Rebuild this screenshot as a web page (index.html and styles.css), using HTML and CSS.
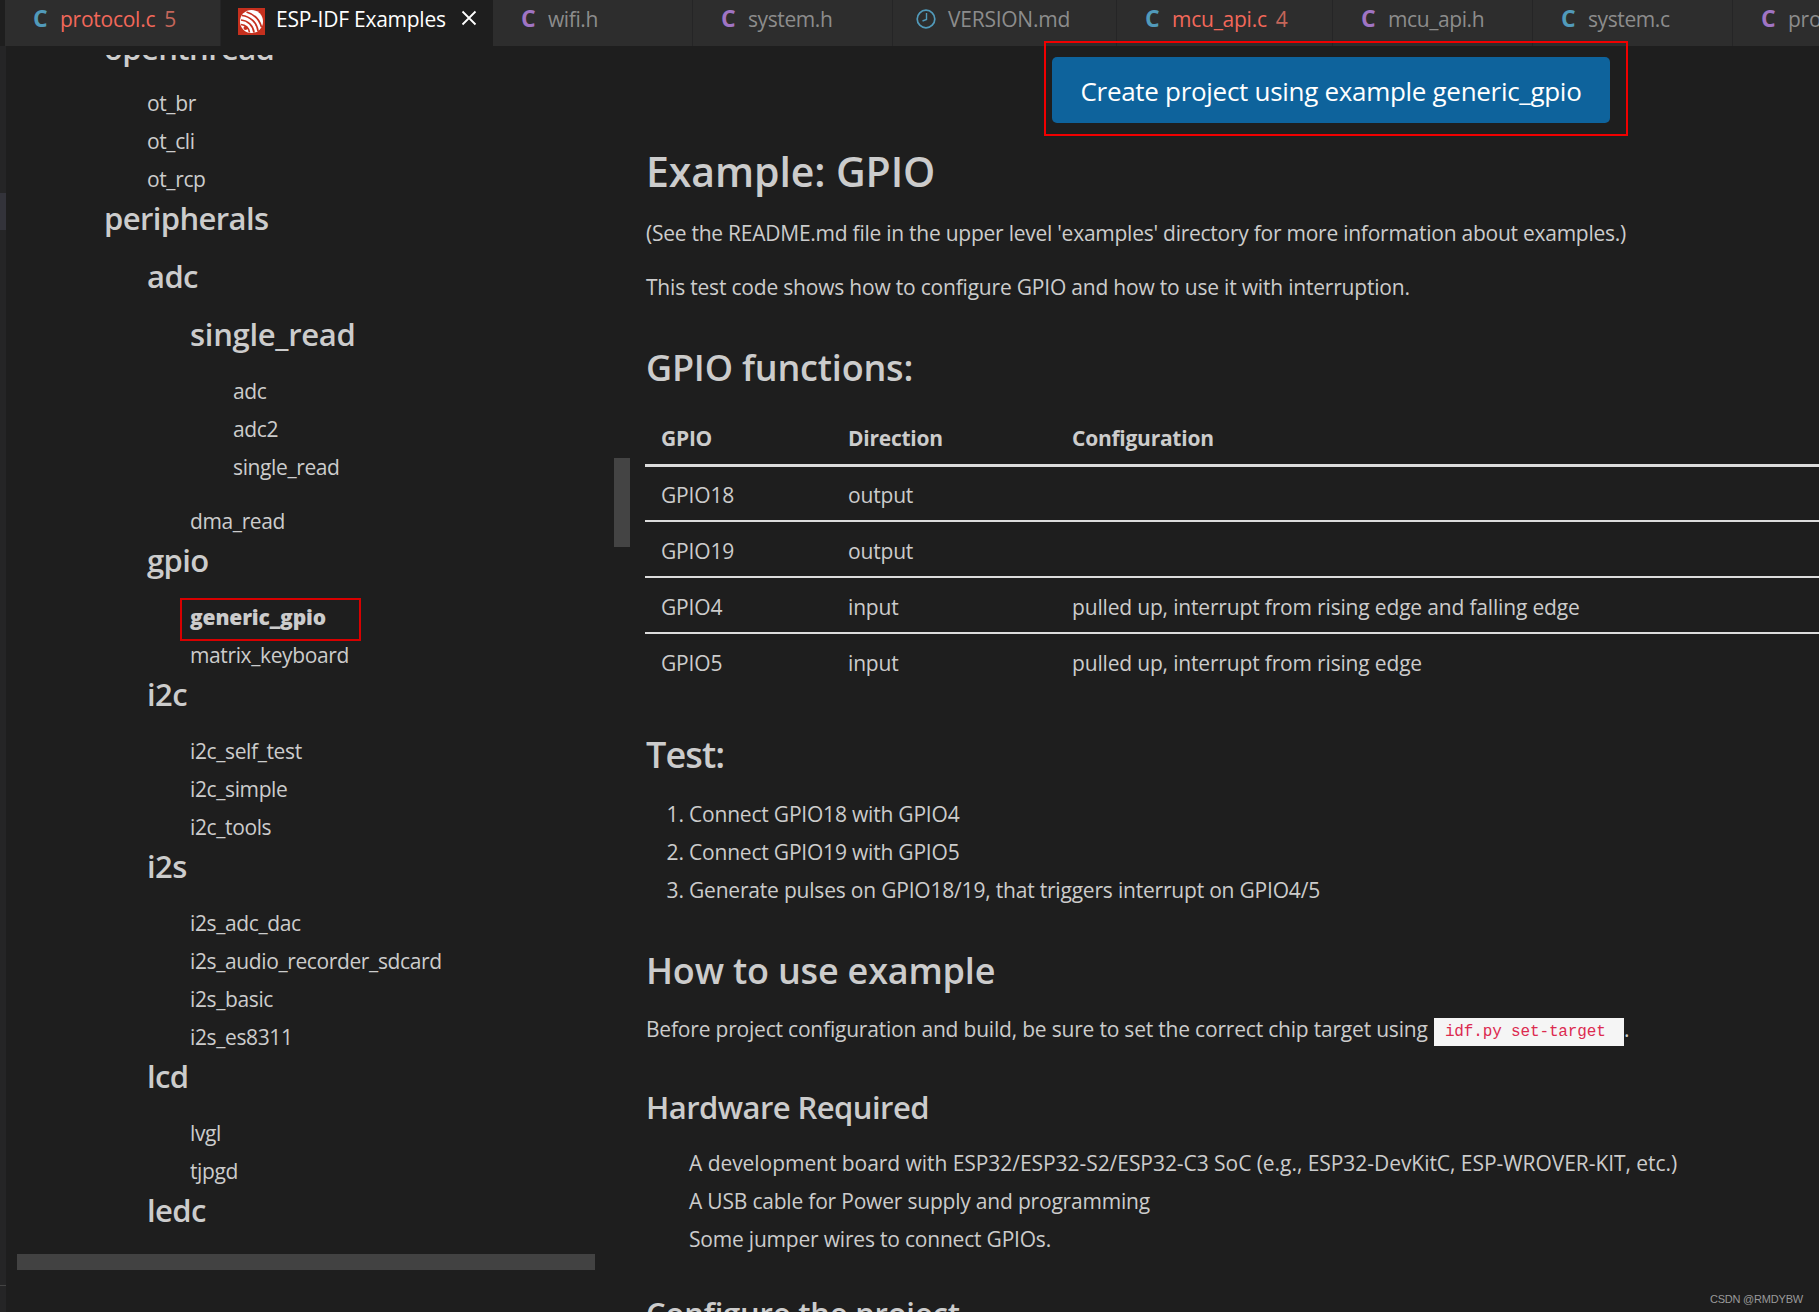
FILE: index.html
```html
<!DOCTYPE html>
<html lang="en">
<head>
<meta charset="utf-8">
<title>ESP-IDF Examples</title>
<link rel="stylesheet" href="styles.css">
</head>
<body>
<div class="app">
  <header class="tabs">
    <div class="tab t1"><span class="ic c">C</span><span class="err">protocol.c</span><span class="num">5</span></div>
    <div class="tab t2 active">
      <svg class="logo" viewBox="0 0 27 27"><rect width="27" height="27" fill="#c5301e"/><circle cx="13.500" cy="13.500" r="11.500" fill="#fff"/><g fill="none" stroke="#c5301e" stroke-width="1.700"><path d="M4 7.500a18 18 0 0 1 16 15.500"/><path d="M3 12a14 14 0 0 1 13 12.500"/><path d="M8.500 4a22 22 0 0 1 15 15"/><path d="M3 16.500a9 9 0 0 1 8.500 8"/></g><circle cx="7.500" cy="20" r="2" fill="#c5301e"/></svg>
      <span class="name">ESP-IDF Examples</span>
      <svg class="close" viewBox="0 0 16 16"><path d="M1.500 1.500l13 13M14.500 1.500l-13 13" stroke="#fff" stroke-width="1.800" fill="none"/></svg>
    </div>
    <div class="tab t3"><span class="ic h">C</span><span>wifi.h</span></div>
    <div class="tab t3"><span class="ic h">C</span><span>system.h</span></div>
    <div class="tab t4">
      <svg class="clock" viewBox="0 0 20 20"><circle cx="10" cy="10" r="8.800" fill="none" stroke="#519aba" stroke-width="1.700"/><path d="M10.500 4v6.500l-4 1.500" fill="none" stroke="#519aba" stroke-width="1.400"/></svg>
      <span>VERSION.md</span>
    </div>
    <div class="tab t5"><span class="ic c">C</span><span class="err">mcu_api.c</span><span class="num">4</span></div>
    <div class="tab t3"><span class="ic h">C</span><span>mcu_api.h</span></div>
    <div class="tab t3"><span class="ic c">C</span><span>system.c</span></div>
    <div class="tab t6"><span class="ic h">C</span><span>pro</span></div>
  </header>
  <div class="body">
    <div class="strip"><div class="strip-thumb"></div></div>
    <aside class="side">
      <div class="tree-view">
      <div class="tree">
        <h2 class="n1">openthread</h2>
        <ul class="n2-list">
          <li>ot_br</li><li>ot_cli</li><li>ot_rcp</li>
        </ul>
        <h2 class="n1">peripherals</h2>
        <h2 class="n2">adc</h2>
        <h2 class="n3">single_read</h2>
        <ul class="n4-list">
          <li>adc</li><li>adc2</li><li>single_read</li>
        </ul>
        <ul class="n3-list gap"><li>dma_read</li></ul>
        <h2 class="n2">gpio</h2>
        <ul class="n3-list">
          <li class="sel"><b>generic_gpio</b></li><li>matrix_keyboard</li>
        </ul>
        <h2 class="n2">i2c</h2>
        <ul class="n3-list">
          <li>i2c_self_test</li><li>i2c_simple</li><li>i2c_tools</li>
        </ul>
        <h2 class="n2">i2s</h2>
        <ul class="n3-list">
          <li>i2s_adc_dac</li><li>i2s_audio_recorder_sdcard</li><li>i2s_basic</li><li>i2s_es8311</li>
        </ul>
        <h2 class="n2">lcd</h2>
        <ul class="n3-list">
          <li>lvgl</li><li>tjpgd</li>
        </ul>
        <h2 class="n2">ledc</h2>
      </div>
      </div>
      <div class="vthumb"></div>
      <div class="hthumb"></div>
    </aside>
    <main class="doc">
      <div class="btn-row"><div class="btn-mark"><button class="btn">Create project using example generic_gpio</button></div></div>
      <h1>Example: GPIO</h1>
      <p>(See the README.md file in the upper level 'examples' directory for more information about examples.)</p>
      <p class="second">This test code shows how to configure GPIO and how to use it with interruption.</p>
      <h2 class="fn">GPIO functions:</h2>
      <table>
        <thead><tr><th class="c1">GPIO</th><th class="c2">Direction</th><th>Configuration</th></tr></thead>
        <tbody>
          <tr><td>GPIO18</td><td>output</td><td></td></tr>
          <tr><td>GPIO19</td><td>output</td><td></td></tr>
          <tr><td>GPIO4</td><td>input</td><td>pulled up, interrupt from rising edge and falling edge</td></tr>
          <tr><td>GPIO5</td><td>input</td><td>pulled up, interrupt from rising edge</td></tr>
        </tbody>
      </table>
      <h2 class="test">Test:</h2>
      <ol>
        <li>Connect GPIO18 with GPIO4</li>
        <li>Connect GPIO19 with GPIO5</li>
        <li>Generate pulses on GPIO18/19, that triggers interrupt on GPIO4/5</li>
      </ol>
      <h2 class="how">How to use example</h2>
      <p class="before">Before project configuration and build, be sure to set the correct chip target using <code>idf.py set-target </code>.</p>
      <h3>Hardware Required</h3>
      <ul class="hw">
        <li>A development board with ESP32/ESP32-S2/ESP32-C3 SoC (e.g., ESP32-DevKitC, ESP-WROVER-KIT, etc.)</li>
        <li>A USB cable for Power supply and programming</li>
        <li>Some jumper wires to connect GPIOs.</li>
      </ul>
      <h3 class="cfg">Configure the project</h3>
    </main>
  </div>
  <div class="mark">CSDN @RMDYBW</div>
</div>
</body>
</html>
```
FILE: styles.css
```css
*, *::before, *::after { box-sizing: border-box; }
html, body { margin: 0; height: 100%; background: #1e1e1e; }
.app { position: relative; width: 1819px; height: 1312px; overflow: hidden; display: flex; flex-direction: column; font-family: "Open Sans", sans-serif; color: #cccccc; font-size: 21px; letter-spacing: -0.25px; }
.tabs { display: flex; height: 46px; flex: none; margin-left: 5px; background: #252526; }
.tab { height: 46px; display: flex; align-items: center; background: #2d2d2d; color: #8c8c8c; border-right: 1px solid #252526; font-size: 21px; padding-bottom: 8px; white-space: nowrap; flex: none; padding-left: 28px; }
.t1 { width: 216px; }
.t2 { width: 272px; padding-left: 17px; background: #1e1e1e; color: #fff; border-right: 0; }
.t3 { width: 200px; letter-spacing: -0.4px; }
.t4 { width: 224px; padding-left: 23px; }
.t5 { width: 216px; }
.t6 { flex: 1; }
.ic { font-weight: 700; font-size: 23px; width: 27px; flex: none; letter-spacing: 0; margin-bottom: 2px; }
.ic.c { color: #519aba; }
.ic.h { color: #a074c4; }
.err { color: #f2685a; }
.num { color: #c4665a; margin-left: 9px; }
.logo { width: 27px; height: 27px; margin-right: 11px; flex: none; margin-bottom: -5px; }
.name { margin-right: 15px; }
.close { width: 16px; height: 16px; flex: none; margin-bottom: 2px; }
.clock { width: 20px; height: 20px; margin-right: 12px; flex: none; }
.body { flex: 1; display: flex; min-height: 0; }
.strip { width: 6px; flex: none; background: #252526; position: relative; }
.strip::after { content: ""; position: absolute; left: 0; right: 0; top: 1239px; height: 1px; background: #444; }
.strip-thumb { height: 37px; margin-top: 147px; background: #33333a; }
.side { position: relative; width: 639px; flex: none; overflow: hidden; }
.tree-view { margin-top: 9px; height: 100%; overflow: hidden; }
.tree { margin-top: -29px; padding-left: 98px; }
.tree h2 { margin: 0; font-weight: 600; color: #cccccc; letter-spacing: -0.6px; white-space: nowrap; }
.tree ul { list-style: none; margin: 0; padding: 0; }
.tree li { height: 38px; line-height: 38px; white-space: nowrap; letter-spacing: -0.38px; }
.tree .n1 { font-size: 31px; line-height: 44px; }
.tree .n2-list + .n1 { margin-top: -2px; }
.tree .n2 { font-size: 31px; line-height: 44px; padding-left: 43px; margin-top: -2px; }
.tree .n1 + .n2 { margin-top: 14px; }
.tree .n3 { font-size: 31px; line-height: 44px; padding-left: 86px; margin-top: 14px; letter-spacing: -0.3px; }
.tree .n2-list { padding-left: 43px; margin-top: 14px; }
.tree .n3-list { padding-left: 86px; margin-top: 16px; }
.tree .n4-list { padding-left: 129px; margin-top: 16px; }
.tree .n3-list.gap { margin-top: 16px; }
.sel { position: relative; }
.tree .sel b { font-weight: 800; letter-spacing: -0.15px; }
.sel::after { content: ""; position: absolute; left: -10px; top: 0; width: 181px; height: 43px; border: 2px solid #d80000; }
.vthumb { position: absolute; left: 608px; top: 412px; width: 16px; height: 89px; background: #444444; }
.hthumb { position: absolute; left: 11px; top: 1208px; width: 578px; height: 16px; background: #424242; }
.doc { flex: 1; min-width: 0; padding-left: 1px; }
.btn-row { padding-left: 406px; padding-top: 11px; }
.btn-mark { position: relative; width: 558px; }
.btn-mark::after { content: ""; position: absolute; left: -8px; right: -18px; top: -16px; bottom: -13px; border: 2px solid #f00000; pointer-events: none; }
.btn { display: block; width: 558px; height: 66px; padding: 2px 0 0; border: 0; border-radius: 5px; background: #0e639c; color: #fff; font: inherit; font-size: 26px; letter-spacing: -0.3px; }
.doc h1 { font-size: 41px; font-weight: 600; line-height: 56px; margin: 20px 0 0; letter-spacing: -0.1px; }
.doc p { margin: 15px 0 0; line-height: 38px; white-space: nowrap; letter-spacing: -0.2px; }
.doc h1 + p { letter-spacing: -0.25px; }
.doc .second { margin-top: 16px; }
.doc h2 { margin: 0; font-weight: 600; font-size: 36px; line-height: 50px; letter-spacing: -0.2px; }
.doc .fn { margin-top: 37px; }
table { border-collapse: collapse; width: 1300px; margin: 19px 0 0 -1px; }
th { text-align: left; font-weight: 700; height: 53px; padding: 0 0 0 16px; border-bottom: 3px solid #dcdcdc; }
td { height: 56px; padding: 3px 0 0 16px; border-bottom: 2px solid #dcdcdc; letter-spacing: -0.17px; }
tr:last-child td { border-bottom: 0; }
.c1 { width: 187px; }
.c2 { width: 224px; }
.doc .test { margin-top: 41px; letter-spacing: -0.9px; }
ol { margin: 15px 0 0; padding-left: 43px; letter-spacing: -0.2px; }
ol li { line-height: 38px; }
.doc .how { margin-top: 37px; }
.doc .before { margin-top: 14px; }
code { display: inline-block; background: #f5f5f5; color: #dc2a50; font-family: "Liberation Mono", monospace; font-size: 16px; line-height: 28px; height: 28px; width: 190px; padding-left: 11px; letter-spacing: -0.15px; margin-left: 1px; vertical-align: 1px; white-space: pre; }
.doc h3 { font-size: 31px; font-weight: 600; line-height: 44px; margin: 37px 0 0; letter-spacing: -0.55px; }
.hw { list-style: none; margin: 15px 0 0; padding-left: 43px; letter-spacing: -0.2px; }
.hw li { line-height: 38px; }
.hw li:first-child { letter-spacing: -0.05px; }
.doc .cfg { margin-top: 33px; letter-spacing: -0.2px; }
.mark { position: absolute; right: 16px; bottom: 7px; font-family: "Liberation Sans", sans-serif; font-size: 11px; color: #9a9a9a; letter-spacing: -0.2px; }
```
